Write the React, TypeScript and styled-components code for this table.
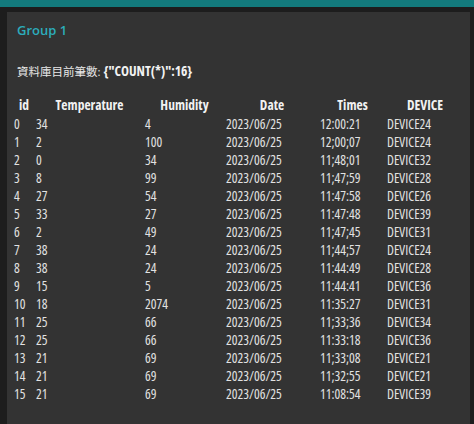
import React from "react";
import styled, { createGlobalStyle } from "styled-components";

const Global = createGlobalStyle`
  html, body { margin: 0; padding: 0; background: #1d1d1d; overflow: hidden; }
  body { font-family: "Open Sans", "Noto Sans", "Noto Sans CJK TC", sans-serif; }
`;

const TopBar = styled.div`
  height: 7px;
  background: #137a7d;
`;

const Frame = styled.div`
  padding: 5px 4px 0 7px;
  background: #1d1d1d;
`;

const Panel = styled.section`
  background: #333333;
  min-height: 420px;
  padding: 8px 10px 0 10px;
  color: #e6e6e6;
`;

const Title = styled.h2`
  margin: 0;
  font-size: 13px;
  line-height: 20px;
  font-weight: 600;
  color: #2cadbc;
`;

const Count = styled.p`
  margin: 21px 0 0 0;
  font-size: 11.5px;
  line-height: 20px;
  color: #e8e8e8;
  font-family: "Open Sans", "Noto Sans CJK TC", sans-serif;
`;

const Strong = styled.b`
  font-size: 13.5px;
  font-weight: 700;
  font-stretch: 75%;
  color: #f2f2f2;
`;

const Table = styled.table`
  margin: 12px 0 0 -3px;
  border-collapse: separate;
  border-spacing: 0;
  table-layout: fixed;
  width: 451px;
  font-size: 13.5px;
  font-stretch: 75%;
`;

const Th = styled.th`
  font-weight: 700;
  text-align: center;
  padding: 0 2px 0 0;
  height: 21px;
  color: #f2f2f2;
  white-space: nowrap;
`;

const Td = styled.td`
  padding: 0 2px 0 0;
  height: 18px;
  line-height: 18px;
  color: #e2e2e2;
  white-space: nowrap;
`;

const Col = styled.col<{ $w: number }>`
  width: ${(p) => p.$w}px;
`;

const rows: [number, number, number, string, string, string][] = [
  [0, 34, 4, "2023/06/25", "12:00:21", "DEVICE24"],
  [1, 2, 100, "2023/06/25", "12;00;07", "DEVICE24"],
  [2, 0, 34, "2023/06/25", "11;48;01", "DEVICE32"],
  [3, 8, 99, "2023/06/25", "11;47;59", "DEVICE28"],
  [4, 27, 54, "2023/06/25", "11:47:58", "DEVICE26"],
  [5, 33, 27, "2023/06/25", "11:47:48", "DEVICE39"],
  [6, 2, 49, "2023/06/25", "11;47;45", "DEVICE31"],
  [7, 38, 24, "2023/06/25", "11;44;57", "DEVICE24"],
  [8, 38, 24, "2023/06/25", "11:44:49", "DEVICE28"],
  [9, 15, 5, "2023/06/25", "11:44:41", "DEVICE36"],
  [10, 18, 2074, "2023/06/25", "11:35:27", "DEVICE31"],
  [11, 25, 66, "2023/06/25", "11;33;36", "DEVICE34"],
  [12, 25, 66, "2023/06/25", "11:33:18", "DEVICE36"],
  [13, 21, 69, "2023/06/25", "11;33;08", "DEVICE21"],
  [14, 21, 69, "2023/06/25", "11;32;55", "DEVICE21"],
  [15, 21, 69, "2023/06/25", "11:08:54", "DEVICE39"],
];

export default function App() {
  return (
    <>
      <Global />
      <TopBar />
      <Frame>
        <Panel>
          <Title>Group 1</Title>
          <Count>
            資料庫目前筆數: <Strong>{'{"COUNT(*)":16}'}</Strong>
          </Count>
          <Table>
            <colgroup>
              <Col $w={22} />
              <Col $w={109} />
              <Col $w={81} />
              <Col $w={94} />
              <Col $w={67} />
              <Col $w={78} />
            </colgroup>
            <thead>
              <tr>
                <Th>id</Th>
                <Th>Temperature</Th>
                <Th>Humidity</Th>
                <Th>Date</Th>
                <Th>Times</Th>
                <Th>DEVICE</Th>
              </tr>
            </thead>
            <tbody>
              {rows.map((r) => (
                <tr key={r[0]}>
                  {r.map((v, i) => (
                    <Td key={i}>{v}</Td>
                  ))}
                </tr>
              ))}
            </tbody>
          </Table>
        </Panel>
      </Frame>
    </>
  );
}
